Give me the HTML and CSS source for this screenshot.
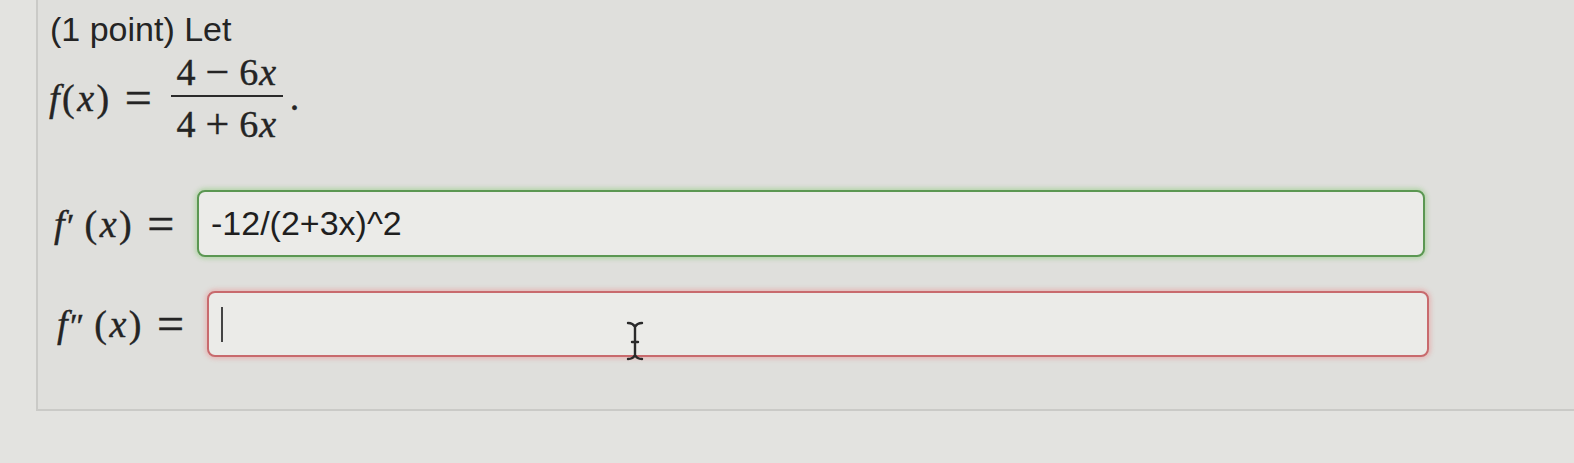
FILE: index.html
```html
<!DOCTYPE html>
<html>
<head>
<meta charset="utf-8">
<link rel="stylesheet" href="styles.css">
</head>
<body>
<div class="page">
  <div class="panel">
    <div class="intro">(1 point) Let</div>
    <div class="def">
      <span class="expr"><span class="math f">f</span><span class="rm">(</span><span class="math">x</span><span class="rm">)</span></span><span class="rm eq">=</span>
      <span class="frac">
        <span class="num"><span class="rm">4</span><span class="rm op">−</span><span class="rm">6</span><span class="math">x</span></span>
        <span class="den"><span class="rm">4</span><span class="rm op">+</span><span class="rm">6</span><span class="math">x</span></span>
      </span><span class="rm dot">.</span>
    </div>
    <div class="row row1">
      <div class="label"><span class="expr"><span class="math f">f</span><span class="rm prime">′</span><span class="rm">(</span><span class="math">x</span><span class="rm">)</span></span><span class="rm eq">=</span></div>
      <div class="field">-12/(2+3x)^2</div>
    </div>
    <div class="row row2">
      <div class="label"><span class="expr"><span class="math f">f</span><span class="rm prime">″</span><span class="rm">(</span><span class="math">x</span><span class="rm">)</span></span><span class="rm eq">=</span></div>
      <div class="field"><span class="caret"></span></div>
    </div>
  </div>
  <svg class="ibeam" width="20" height="40" viewBox="0 0 20 40">
    <path d="M3 2 Q8 2 10 6 Q12 2 17 2 M10 6 L10 34 M3 38 Q8 38 10 34 Q12 38 17 38 M7 21 L13 21" fill="none" stroke="#2a2a2a" stroke-width="2.4" stroke-linecap="round"/>
  </svg>
</div>
</body>
</html>
```
FILE: styles.css
```css
html, body {
  margin: 0;
  padding: 0;
}
body {
  background: #e3e3e0;
  width: 1574px;
  height: 463px;
  overflow: hidden;
}
.page {
  position: relative;
  width: 1574px;
  height: 463px;
}
.panel {
  margin-left: 36px;
  height: 411px;
  background: #dfdfdc;
  border-left: 2px solid #cacac7;
  border-bottom: 2px solid #cacac7;
  box-sizing: border-box;
  padding-left: 10px;
  padding-top: 9px;
  color: #242424;
}
.intro {
  font-family: "Liberation Sans", Arial, sans-serif;
  font-size: 34px;
  line-height: 40px;
  margin-left: 2px;
}
.math {
  font-family: "Liberation Serif", "Times New Roman", serif;
  font-style: italic;
}
.rm {
  font-family: "Liberation Serif", "Times New Roman", serif;
}
.def, .row .label {
  -webkit-text-stroke: 0.4px #242424;
}
.expr {
  letter-spacing: 2.5px;
}
.f {
  margin-left: 1px;
}
.def {
  display: flex;
  align-items: center;
  font-size: 38px;
  margin-top: 2px;
}
.eq {
  margin: 0 0 0 13px;
  font-size: 48px;
  line-height: 40px;
}
.def .eq {
  margin-right: 19px;
}
.frac {
  display: inline-flex;
  flex-direction: column;
  align-items: center;
  width: 112px;
}
.num, .den {
  display: flex;
  justify-content: center;
  align-items: center;
  letter-spacing: 1px;
}
.num {
  align-self: stretch;
  padding-bottom: 2px;
  height: 42px;
  border-bottom: 2px solid #2a2a2a;
}
.den {
  padding-top: 6px;
  height: 42px;
}
.op {
  font-size: 42px;
  margin: 0 9px;
}
.dot {
  margin-left: 7px;
  margin-top: -2px;
}
.row {
  display: flex;
  align-items: center;
  font-size: 38px;
}
.row1 {
  margin-top: 45px;
}
.row2 {
  margin-top: 34px;
}
.label {
  display: flex;
  align-items: center;
  box-sizing: border-box;
}
.row1 .label {
  width: 149px;
  padding-left: 5px;
}
.row2 .label {
  width: 159px;
  padding-left: 8px;
}
.prime {
  font-size: 34px;
  letter-spacing: 2px;
  margin-right: 8px;
}
.field {
  height: 67px;
  box-sizing: border-box;
  border-radius: 8px;
  background: #ebebe8;
  font-family: "Liberation Sans", Arial, sans-serif;
  font-size: 34px;
  display: flex;
  align-items: center;
  color: #1f1f1f;
}
.row1 .field {
  width: 1228px;
  padding-left: 12px;
  border: 2px solid #5b9752;
  box-shadow: 0 0 4px 2px rgba(130, 200, 110, 0.45);
}
.row2 .field {
  width: 1222px;
  height: 66px;
  padding-left: 12px;
  border: 2px solid #c86a6d;
  box-shadow: 0 0 4px 2px rgba(235, 140, 140, 0.45);
}
.caret {
  display: block;
  width: 2px;
  height: 35px;
  background: #444;
}
.ibeam {
  position: absolute;
  left: 625px;
  top: 321px;
}
```
